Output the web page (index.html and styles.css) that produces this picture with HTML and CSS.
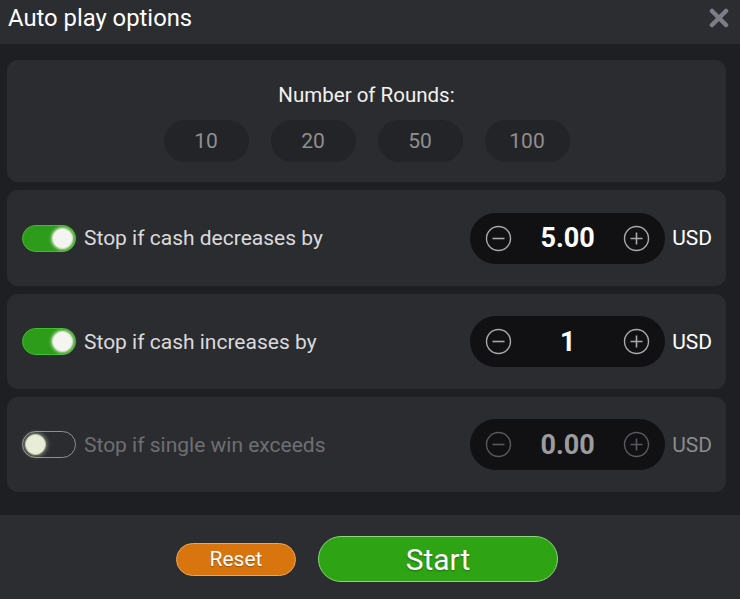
FILE: index.html
```html
<!DOCTYPE html>
<html>
<head>
<meta charset="utf-8">
<link rel="stylesheet" href="styles.css">
</head>
<body>
<div class="dialog">
  <header class="head">
    <h1 class="title">Auto play options</h1>
    <svg class="close" width="20" height="20" viewBox="0 0 20 20"><path d="M3 3 L17 17 M17 3 L3 17" stroke="#7b7e86" stroke-width="4.5" stroke-linecap="round"/></svg>
  </header>
  <main class="content">
    <section class="card rounds">
      <div class="rounds-title">Number of Rounds:</div>
      <div class="pills">
        <span class="pill">10</span>
        <span class="pill">20</span>
        <span class="pill">50</span>
        <span class="pill">100</span>
      </div>
    </section>
    <section class="card row">
      <span class="toggle on"><span class="knob"></span></span>
      <span class="label">Stop if cash decreases by</span>
      <div class="stepper">
        <span class="sbtn"><svg width="27" height="27" viewBox="0 0 27 27"><circle cx="13.5" cy="13.5" r="12" fill="none" stroke="currentColor" stroke-width="1.4"/><path d="M7.5 13.5 H19.5" stroke="currentColor" stroke-width="1.6"/></svg></span>
        <span class="value">5.00</span>
        <span class="sbtn"><svg width="27" height="27" viewBox="0 0 27 27"><circle cx="13.5" cy="13.5" r="12" fill="none" stroke="currentColor" stroke-width="1.4"/><path d="M7.5 13.5 H19.5 M13.5 7.5 V19.5" stroke="currentColor" stroke-width="1.6"/></svg></span>
      </div>
      <span class="cur">USD</span>
    </section>
    <section class="card row">
      <span class="toggle on"><span class="knob"></span></span>
      <span class="label">Stop if cash increases by</span>
      <div class="stepper">
        <span class="sbtn"><svg width="27" height="27" viewBox="0 0 27 27"><circle cx="13.5" cy="13.5" r="12" fill="none" stroke="currentColor" stroke-width="1.4"/><path d="M7.5 13.5 H19.5" stroke="currentColor" stroke-width="1.6"/></svg></span>
        <span class="value">1</span>
        <span class="sbtn"><svg width="27" height="27" viewBox="0 0 27 27"><circle cx="13.5" cy="13.5" r="12" fill="none" stroke="currentColor" stroke-width="1.4"/><path d="M7.5 13.5 H19.5 M13.5 7.5 V19.5" stroke="currentColor" stroke-width="1.6"/></svg></span>
      </div>
      <span class="cur">USD</span>
    </section>
    <section class="card row disabled">
      <span class="toggle"><span class="knob"></span></span>
      <span class="label">Stop if single win exceeds</span>
      <div class="stepper">
        <span class="sbtn"><svg width="27" height="27" viewBox="0 0 27 27"><circle cx="13.5" cy="13.5" r="12" fill="none" stroke="currentColor" stroke-width="1.4"/><path d="M7.5 13.5 H19.5" stroke="currentColor" stroke-width="1.6"/></svg></span>
        <span class="value">0.00</span>
        <span class="sbtn"><svg width="27" height="27" viewBox="0 0 27 27"><circle cx="13.5" cy="13.5" r="12" fill="none" stroke="currentColor" stroke-width="1.4"/><path d="M7.5 13.5 H19.5 M13.5 7.5 V19.5" stroke="currentColor" stroke-width="1.6"/></svg></span>
      </div>
      <span class="cur">USD</span>
    </section>
  </main>
  <footer class="foot">
    <button class="btn reset">Reset</button>
    <button class="btn start">Start</button>
  </footer>
</div>
</body>
</html>
```
FILE: styles.css
```css
* { box-sizing: border-box; }
html, body { margin: 0; padding: 0; }
body {
  width: 740px;
  height: 599px;
  background: #1e1f22;
  font-family: Roboto, "Liberation Sans", sans-serif;
  overflow: hidden;
}
.dialog {
  display: flex;
  flex-direction: column;
  height: 599px;
}
.head {
  height: 44px;
  background: #2c2d31;
  display: flex;
  align-items: center;
  justify-content: space-between;
  padding: 0 11px 0 8px;
}
.title {
  margin: 0;
  font-size: 23.8px;
  font-weight: 400;
  color: #ffffff;
  line-height: 1;
  margin-top: -7px;
}
.close { margin-top: -8px; }
.content {
  background: #1e1f22;
  padding: 16px 14px 23px 7px;
  display: flex;
  flex-direction: column;
  gap: 8px;
}
.card {
  background: #2b2c30;
  border-radius: 11px;
}
.rounds {
  height: 122px;
  display: flex;
  flex-direction: column;
  align-items: center;
  padding-top: 22px;
}
.rounds-title {
  color: #f2f2f2;
  font-size: 20.5px;
  line-height: 26px;
}
.pills {
  display: flex;
  gap: 22px;
  margin-top: 12px;
}
.pill {
  width: 85px;
  height: 42px;
  border-radius: 21px;
  background: #232427;
  color: #8f8f91;
  font-size: 21px;
  display: flex;
  align-items: center;
  justify-content: center;
}
.row {
  height: 96px;
  display: flex;
  align-items: center;
  padding: 0 14px 0 15px;
}
.row + .row { height: 95px; }
.toggle {
  width: 54px;
  height: 27px;
  border-radius: 14px;
  background: #2d9c1a;
  border: 1.5px solid #3fbf28;
  display: flex;
  align-items: center;
  justify-content: flex-end;
  padding: 0 2px;
  flex: none;
}
.knob {
  width: 21px;
  height: 21px;
  border-radius: 50%;
  background: #f4f4f0;
  border: 1.5px solid #d8e0c8;
  box-shadow: 0 0 3px 1px rgba(255,255,240,0.6);
}
.label {
  margin-left: 8px;
  font-size: 21px;
  color: #dadadb;
  flex: 1;
}
.stepper {
  width: 195px;
  height: 51px;
  border-radius: 26px;
  background: #111113;
  display: flex;
  align-items: center;
  justify-content: space-between;
  padding: 0 15px;
  color: #a8a8aa;
}
.sbtn { display: flex; }
.value {
  font-size: 27px;
  font-weight: 700;
  color: #ffffff;
}
.cur {
  margin-left: 7px;
  font-size: 21px;
  color: #ffffff;
}
.disabled .toggle {
  background: transparent;
  border-color: #8e8f92;
  justify-content: flex-start;
  padding: 0 2px;
}
.disabled .knob {
  background: #e9edd8;
  border-color: #c8d0b0;
  box-shadow: 0 0 4px 1px rgba(230,240,200,0.5);
}
.disabled .label { color: #6e6f72; }
.disabled .stepper { color: #58595c; }
.disabled .value { color: #9c9c9e; }
.disabled .cur { color: #8a8b8e; }
.foot {
  flex: 1;
  background: #2c2d31;
  display: flex;
  align-items: center;
  justify-content: center;
  gap: 22px;
  padding: 4px 6px 0 0;
}
.btn {
  font-family: Roboto, "Liberation Sans", sans-serif;
  color: #ffffff;
  cursor: pointer;
}
.reset {
  width: 120px;
  height: 33px;
  border-radius: 17px;
  background: #d8750e;
  border: 1px solid #f0a455;
  font-size: 21px;
  text-shadow: 0 1px 1px rgba(0,0,0,0.3);
}
.start {
  width: 240px;
  height: 46px;
  border-radius: 23px;
  background: #2ea414;
  border: 1px solid #8ad67a;
  font-size: 30px;
  text-shadow: 0 1px 2px rgba(0,0,0,0.35);
}
```
